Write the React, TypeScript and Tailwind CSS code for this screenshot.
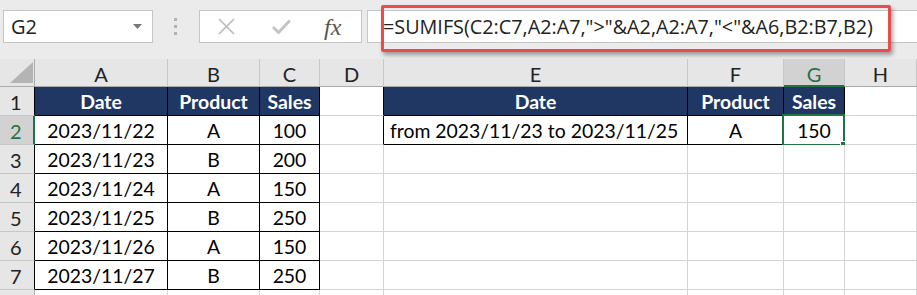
import React from "react";

const cols = ["A", "B", "C", "D", "E", "F", "G", "H"];

type Cell = { t?: string; head?: boolean; left?: boolean };

// row index 1..8, cols A..H
const data: Record<number, Cell[]> = {
  1: [
    { t: "Date", head: true }, { t: "Product", head: true }, { t: "Sales", head: true }, {},
    { t: "Date", head: true }, { t: "Product", head: true }, { t: "Sales", head: true }, {},
  ],
  2: [{ t: "2023/11/22" }, { t: "A" }, { t: "100" }, {}, { t: "from 2023/11/23 to 2023/11/25", left: true }, { t: "A" }, { t: "150" }, {}],
  3: [{ t: "2023/11/23" }, { t: "B" }, { t: "200" }, {}, {}, {}, {}, {}],
  4: [{ t: "2023/11/24" }, { t: "A" }, { t: "150" }, {}, {}, {}, {}, {}],
  5: [{ t: "2023/11/25" }, { t: "B" }, { t: "250" }, {}, {}, {}, {}, {}],
  6: [{ t: "2023/11/26" }, { t: "A" }, { t: "150" }, {}, {}, {}, {}, {}],
  7: [{ t: "2023/11/27" }, { t: "B" }, { t: "250" }, {}, {}, {}, {}, {}],
  8: [{}, {}, {}, {}, {}, {}, {}, {}],
};

// is the cell part of a bordered table
function inTable(r: number, c: number) {
  if (c <= 2 && r >= 1 && r <= 7) return true;
  if (c >= 4 && c <= 6 && r >= 1 && r <= 2) return true;
  return false;
}

function CellBox({ r, c, cell }: { r: number; c: number; cell: Cell }) {
  const rightBlack = inTable(r, c) || inTable(r, c + 1);
  const bottomBlack = inTable(r, c) || inTable(r + 1, c);
  return (
    <div
      className={
        "relative h-[29px] flex items-center border-r border-b " +
        (rightBlack ? "border-r-black " : "border-r-[#d4d4d4] ") +
        (bottomBlack ? "border-b-black " : "border-b-[#d4d4d4] ") +
        (cell.head ? "bg-[#203764] text-white font-bold " : "bg-white text-black ") +
        (cell.left ? "justify-start pl-[6px]" : "justify-center")
      }
    >
      <span className="whitespace-nowrap leading-none pt-[2px]">{cell.t}</span>
      {r === 2 && c === 6 && (
        <div className="absolute -left-[2px] -top-[2px] w-[63px] h-[32px] border-2 border-[#217346]">
          <div className="absolute -right-[4px] -bottom-[4px] w-[7px] h-[7px] bg-[#217346] border border-white" />
        </div>
      )}
    </div>
  );
}

export default function App() {
  return (
    <div className="w-[917px] h-[295px] overflow-hidden bg-white relative" style={{ fontFamily: "Lato, 'Noto Sans', sans-serif" }}>
      {/* toolbar */}
      <div className="h-[59px] bg-[#ebebeb] flex items-start pt-[10px] relative">
        <div className="ml-[3px] w-[150px] h-[33px] bg-white border border-[#c6c6c6] flex items-center justify-between pl-[7px] pr-[10px]">
          <span className="text-[20px] text-[#222]" style={{ fontFamily: "'Open Sans', sans-serif" }}>G2</span>
          <svg width="9" height="5" viewBox="0 0 9 5"><path d="M0 0h9L4.5 5z" fill="#777" /></svg>
        </div>
        <div className="ml-[21px] mt-[8px] flex flex-col gap-[4px]">
          <div className="w-[3px] h-[3px] bg-[#b3b3b3]" />
          <div className="w-[3px] h-[3px] bg-[#b3b3b3]" />
          <div className="w-[3px] h-[3px] bg-[#b3b3b3]" />
        </div>
        <div className="ml-[22px] w-[163px] h-[33px] bg-white border border-[#c6c6c6] flex items-center">
          <svg className="ml-[18px]" width="17" height="17" viewBox="0 0 17 17">
            <path d="M1 1L16 16M16 1L1 16" stroke="#b9b9b9" strokeWidth="1.6" />
          </svg>
          <svg className="ml-[37px]" width="19" height="15" viewBox="0 0 19 15">
            <path d="M1 8L6.5 13.5L18 1.5" stroke="#c4c4c4" strokeWidth="3" fill="none" />
          </svg>
          <span className="ml-[33px] text-[24px] italic text-[#555] leading-none" style={{ fontFamily: "'Liberation Serif', serif" }}>fx</span>
        </div>
        <div className="ml-[5px] flex-1 h-[33px] bg-white border border-[#c6c6c6] border-r-0 flex items-center pl-[15px]">
          <span className="text-[19.8px] text-[#222] whitespace-nowrap" style={{ fontFamily: "'Open Sans', sans-serif" }}>
            =SUMIFS(C2:C7,A2:A7,"&gt;"&amp;A2,A2:A7,"&lt;"&amp;A6,B2:B7,B2)
          </span>
        </div>
        <div className="absolute left-[381px] top-[5px] w-[510px] h-[47px] border-[3px] border-[#ea4b4b] rounded-[2px] shadow-[2px_3px_4px_rgba(0,0,0,0.35)]" />
      </div>

      {/* sheet */}
      <div className="grid text-[19.4px]" style={{ gridTemplateColumns: "35px 133px 92px 60px 64px 304px 96px 61px 1fr" }}>
        {/* column header row */}
        <div className="h-[28px] bg-[#e6e6e6] border-r border-b border-[#ababab] flex items-end justify-end pr-[1px] pb-[3px]">
          <svg width="23" height="21" viewBox="0 0 23 21"><path d="M23 0V21H0z" fill="#b4b4b4" /></svg>
        </div>
        {cols.map((c) => (
          <div
            key={c}
            className={
              "h-[28px] flex items-center justify-center border-r border-r-[#c8c8c8] text-[20px] " +
              (c === "G" ? "bg-[#d2d2d2] text-[#217346] border-b-2 border-b-[#217346]" : "bg-[#e6e6e6] text-[#222] border-b border-b-[#ababab]")
            }
          >
            <span className="leading-none pt-[3px]">{c}</span>
          </div>
        ))}
        {[1, 2, 3, 4, 5, 6, 7, 8].map((r) => (
          <React.Fragment key={r}>
            <div
              className={
                "h-[29px] flex items-center pl-[10px] border-b border-b-[#c8c8c8] border-r text-[20px] " +
                (r === 2 ? "bg-[#d2d2d2] text-[#217346] border-r-2 border-r-[#217346]" : "bg-[#e6e6e6] text-[#222] ") +
                (r >= 1 && r <= 7 && r !== 2 ? "border-r-black" : r === 8 ? "border-r-[#ababab]" : "")
              }
            >
              <span className="leading-none pt-[2px]">{r < 8 ? r : ""}</span>
            </div>
            {data[r].map((cell, ci) => (
              <CellBox key={ci} r={r} c={ci} cell={cell} />
            ))}
          </React.Fragment>
        ))}
      </div>
    </div>
  );
}
